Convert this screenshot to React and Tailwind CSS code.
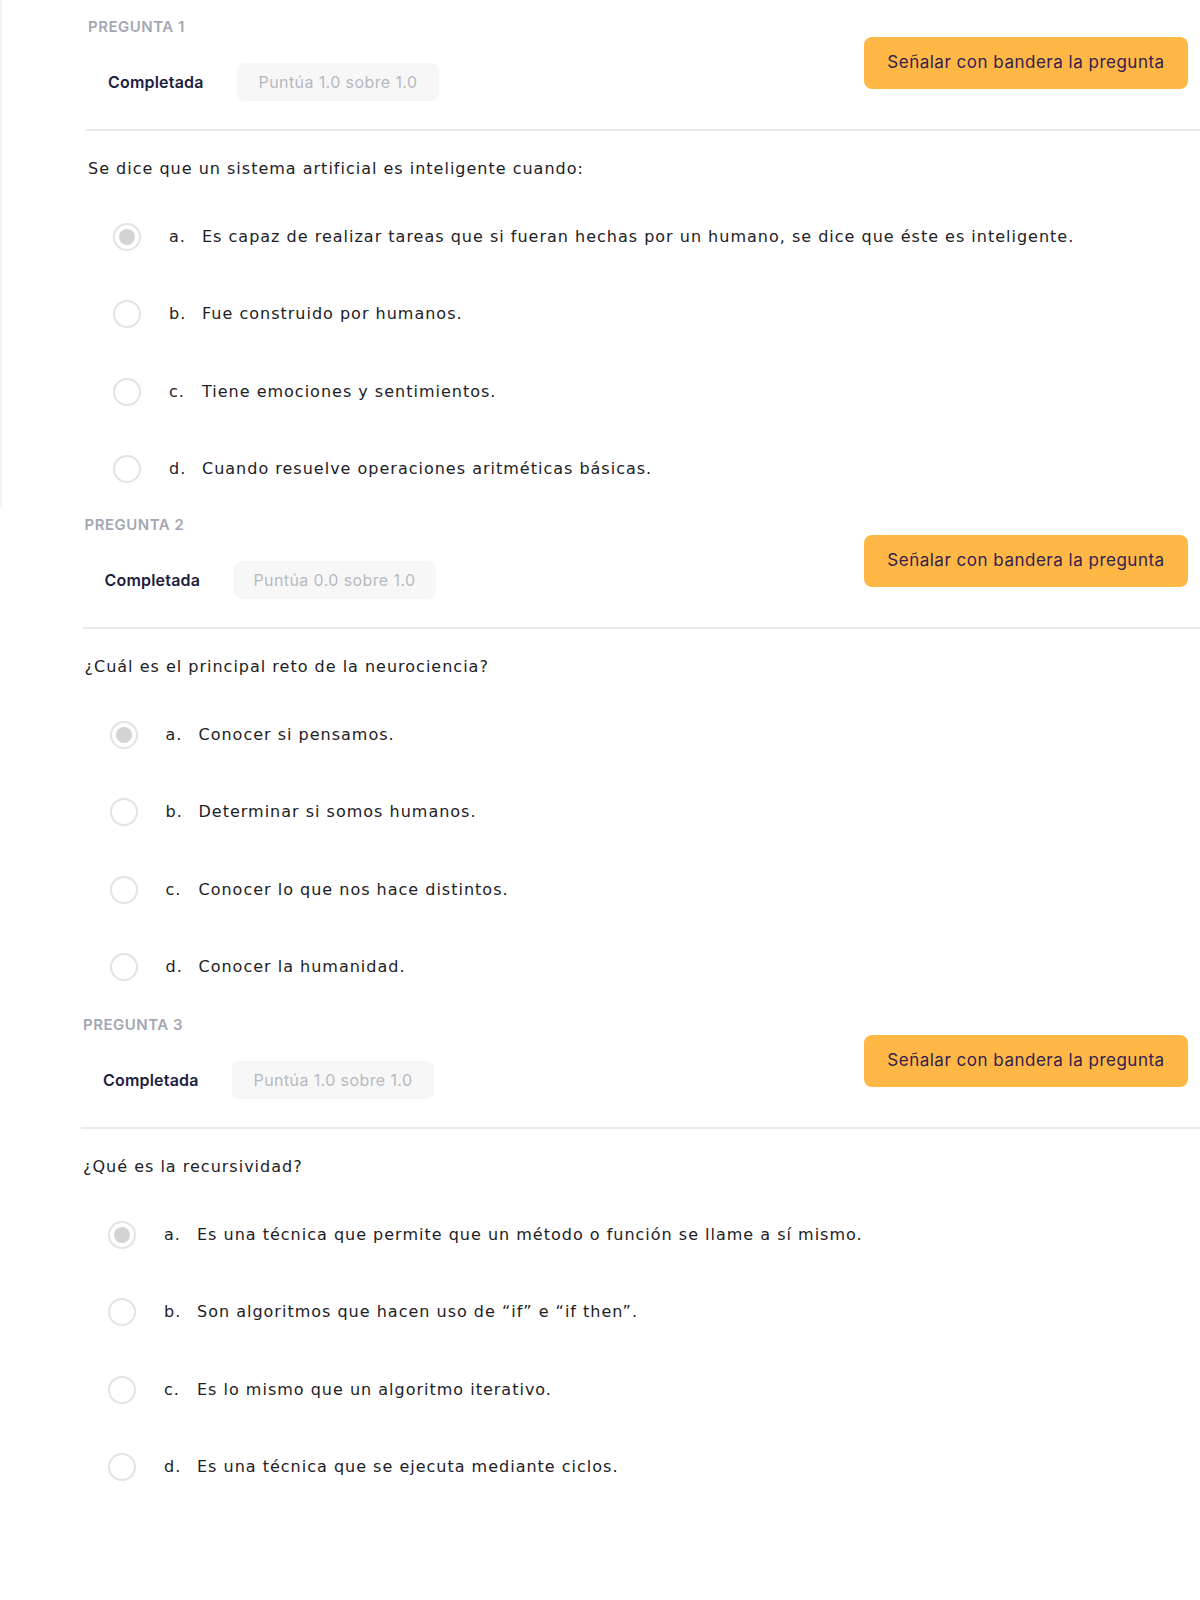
const questions = [
  {
    n: 1,
    score: 'Puntúa 1.0 sobre 1.0',
    shift: 'ml-[84px]',
    pad: 'pt-[17px]',
    text: 'Se dice que un sistema artificial es inteligente cuando:',
    options: [
      'Es capaz de realizar tareas que si fueran hechas por un humano, se dice que éste es inteligente.',
      'Fue construido por humanos.',
      'Tiene emociones y sentimientos.',
      'Cuando resuelve operaciones aritméticas básicas.',
    ],
  },
  {
    n: 2,
    score: 'Puntúa 0.0 sobre 1.0',
    shift: 'ml-[82.5px]',
    pad: 'pt-[7px]',
    text: '¿Cuál es el principal reto de la neurociencia?',
    options: [
      'Conocer si pensamos.',
      'Determinar si somos humanos.',
      'Conocer lo que nos hace distintos.',
      'Conocer la humanidad.',
    ],
  },
  {
    n: 3,
    score: 'Puntúa 1.0 sobre 1.0',
    shift: 'ml-[81px]',
    pad: 'pt-[9px]',
    text: '¿Qué es la recursividad?',
    options: [
      'Es una técnica que permite que un método o función se llame a sí mismo.',
      'Son algoritmos que hacen uso de “if” e “if then”.',
      'Es lo mismo que un algoritmo iterativo.',
      'Es una técnica que se ejecuta mediante ciclos.',
    ],
  },
];

const letters = ['a.', 'b.', 'c.', 'd.'];

function Radio({ checked }) {
  return (
    <span className="flex h-[28px] w-[28px] shrink-0 items-center justify-center rounded-full border-2 border-[#e3e3e3] bg-white">
      {checked && <span className="h-[16px] w-[16px] rounded-full bg-[#d3d3d3]" />}
    </span>
  );
}

function Question({ q, first }) {
  return (
    <div className={`${q.pad} ${first ? 'border-l-2 border-[#f3f3f3]' : ''}`}>
      <div className={q.shift}>
        {/* header */}
        <div className="flex justify-between pr-[12px]">
          <div>
            <div className="pl-[2px] text-[15px] leading-[20px] font-semibold tracking-[0.5px] text-[#a4a7b3] font-['Inter',sans-serif]">
              PREGUNTA {q.n}
            </div>
            <div className="mt-[26px] flex items-center font-['Inter',sans-serif]">
              <span className="w-[151px] pl-[22px] text-[16px] font-semibold tracking-[0.2px] text-[#1d2040]">
                Completada
              </span>
              <span className="flex h-[38px] w-[202px] items-center justify-center rounded-[8px] bg-[#f7f7f8] text-[16px] tracking-[0.4px] text-[#b7b9c2]">
                {q.score}
              </span>
            </div>
          </div>
          <button className="mt-[20px] h-[52px] w-[324px] rounded-[8px] bg-[#ffb845] text-[17px] tracking-[0.5px] text-[#33204f] font-['Inter',sans-serif]">
            Señalar con bandera la pregunta
          </button>
        </div>

        <div className="mt-[28px] h-[2px] bg-[#e8e9ec]" />

        <div className="mt-[27px] pl-[2px] text-[16px] leading-[22px] tracking-[1px] text-[#1d2125] font-['DejaVu_Sans',sans-serif]">
          {q.text}
        </div>

        {/* options */}
        <div className="mt-[18px]">
          {q.options.map((o, i) => (
            <div key={i} className="flex h-[77.5px] items-center pl-[27px] text-[16px] tracking-[1px] text-[#1d2125] font-['DejaVu_Sans',sans-serif]">
              <Radio checked={i === 0} />
              <span className="ml-[28px] w-[33px]">{letters[i]}</span>
              <span>{o}</span>
            </div>
          ))}
        </div>
      </div>
    </div>
  );
}

export default function App() {
  return (
    <div className="min-h-[1600px] w-[1200px] bg-white">
      {questions.map((q, i) => (
        <Question key={q.n} q={q} first={i === 0} />
      ))}
    </div>
  );
}
